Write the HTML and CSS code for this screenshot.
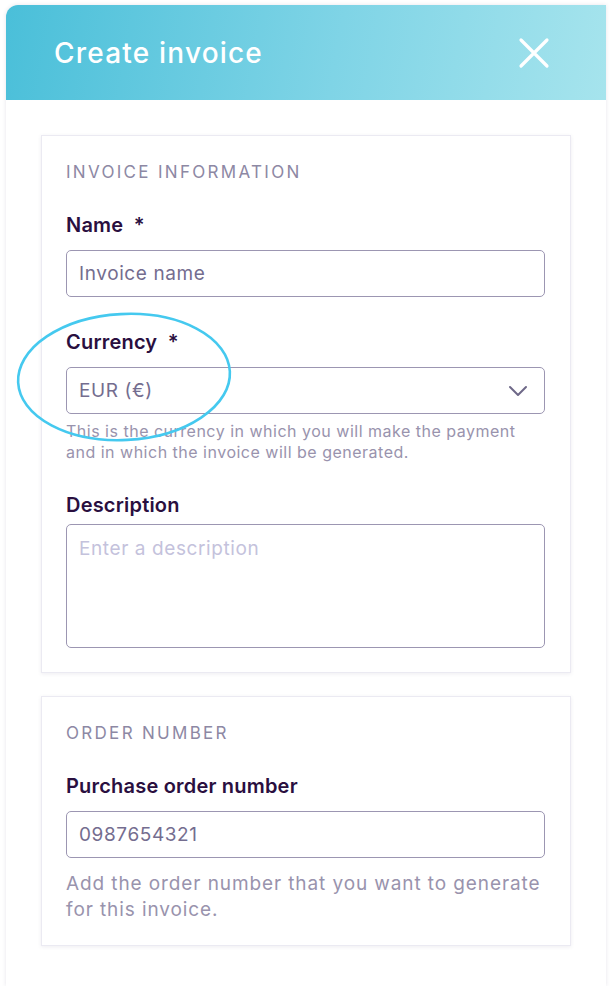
FILE: index.html
```html
<!DOCTYPE html>
<html lang="en">
<head>
<meta charset="utf-8">
<title>Create invoice</title>
<link rel="stylesheet" href="styles.css">
</head>
<body>
<div class="panel">
  <header class="head">
    <h1 class="title">Create invoice</h1>
    <svg class="close" width="32" height="32" viewBox="0 0 32 32" aria-label="Close">
      <path d="M3 3 L29 29 M29 3 L3 29" stroke="#fff" stroke-width="3.2" stroke-linecap="round" fill="none"/>
    </svg>
  </header>
  <main class="body">
    <section class="card">
      <h2 class="section">INVOICE INFORMATION</h2>
      <div class="field">
        <label class="label">Name&nbsp; *</label>
        <div class="input"><span class="value">Invoice name</span></div>
      </div>
      <div class="field currency">
        <label class="label">Currency&nbsp; *</label>
        <div class="input select"><span class="value">EUR (€)</span>
          <svg class="chev" width="20" height="12" viewBox="0 0 20 12"><path d="M2 2 L10 10 L18 2" stroke="#6e6888" stroke-width="2" fill="none" stroke-linecap="round" stroke-linejoin="round"/></svg>
        </div>
        <p class="help small">This is the currency in which you will make the payment and in which the invoice will be generated.</p>
        <svg class="ring" width="230" height="140" viewBox="0 0 230 140"><ellipse cx="115" cy="70" rx="106" ry="63" transform="rotate(-3 115 70)" stroke="#45c9ef" stroke-width="2.6" fill="none"/></svg>
      </div>
      <div class="field desc">
        <label class="label">Description</label>
        <div class="input area"><span class="placeholder">Enter a description</span></div>
      </div>
    </section>
    <section class="card last">
      <h2 class="section">ORDER NUMBER</h2>
      <div class="field">
        <label class="label">Purchase order number</label>
        <div class="input"><span class="value">0987654321</span></div>
        <p class="help">Add the order number that you want to generate for this invoice.</p>
      </div>
    </section>
  </main>
</div>
</body>
</html>
```
FILE: styles.css
```css
* { box-sizing: border-box; }
html, body { margin: 0; padding: 0; background: #fff; }
body { font-family: Inter, "Noto Sans", sans-serif; color: #2a0f3f; }
.panel {
  margin: 5px 6px 0 6px;
  height: 981px;
  background: #fff;
  border-radius: 12px 0 0 0;
  box-shadow: 0 0 4px rgba(40, 30, 80, 0.12);
  overflow: hidden;
}
.head {
  height: 95px;
  display: flex;
  align-items: center;
  justify-content: space-between;
  padding: 0 56px 0 48px;
  background: linear-gradient(100deg, #4abfd9 0%, #7fd4e6 55%, #a6e4ed 100%);
}
.title {
  margin: 0;
  font-size: 28px;
  font-weight: 500;
  color: #fff;
  letter-spacing: 1.2px;
}
.close { display: block; }
.body {
  padding: 35px 35px 40px 35px;
  display: flex;
  flex-direction: column;
  gap: 23px;
}
.card {
  background: #fff;
  border: 1px solid #ebeaf2;
  box-shadow: 0 1px 4px rgba(40, 30, 80, 0.08);
  padding: 24px 25px 24px 24px;
  display: flex;
  flex-direction: column;
}
.card.last { padding-bottom: 22px; }
.section {
  margin: 0 0 28px 0;
  font-size: 17px;
  font-weight: 400;
  line-height: 24px;
  letter-spacing: 2.3px;
  color: #8d88a4;
}
.field { display: flex; flex-direction: column; position: relative; }
.field + .field { margin-top: 32px; }
.label {
  font-size: 20px;
  font-weight: 600;
  line-height: 26px;
  letter-spacing: 0.2px;
  color: #2a0f3f;
  margin-bottom: 12px;
}
.desc .label { margin-bottom: 6px; }
.input {
  height: 47px;
  border: 1px solid #9c96b2;
  border-radius: 5px;
  display: flex;
  align-items: center;
  padding: 0 12px;
  font-size: 19px;
  letter-spacing: 0.6px;
  color: #746d8f;
}
.select { justify-content: space-between; padding-right: 16px; }
.chev { display: block; }
.area { height: 124px; align-items: flex-start; padding-top: 12px; }
.placeholder { color: #c4c2dc; }
.help {
  margin: 13px 0 0 0;
  font-size: 19px;
  line-height: 26px;
  letter-spacing: 0.9px;
  color: #9993ad;
}
.help.small {
  margin-top: 7px;
  font-size: 16px;
  line-height: 21px;
  letter-spacing: 0.5px;
}
.ring {
  position: absolute;
  left: -57px;
  top: -22px;
  pointer-events: none;
}
.field.currency + .field { margin-top: 29px; }
```
